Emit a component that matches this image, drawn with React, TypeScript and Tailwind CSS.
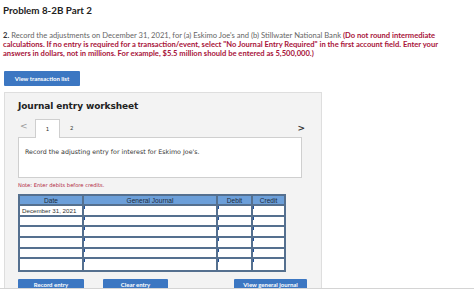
import React from "react";

// Static recreation of the "Problem 8-2B Part 2" journal entry worksheet.

const rows = ["December 31, 2021", "", "", "", "", ""];

function InputCell({ w }: { w: string }) {
  return (
    <div className={`${w} relative h-full border-l-2 border-[#55708f] bg-white`}>
      <span className="absolute left-0 top-0 h-[3px] w-[1px] bg-[#1f4f9a]" />
    </div>
  );
}

function BlueButton({ label, className = "" }: { label: string; className?: string }) {
  return (
    <div
      className={`flex h-[15px] justify-center rounded-[1px] bg-[#3c77c2] text-[6px] font-bold leading-[6px] text-white ${className}`}
    >
      {label}
    </div>
  );
}

export default function App() {
  return (
    <div className="h-[292px] w-[474px] overflow-hidden bg-white">
      <div className="h-[289px] overflow-hidden border-b border-[#d4d4d4] font-['Lato',sans-serif]">
        <h1 className="pl-[3px] pt-[3px] text-[9.8px] font-bold leading-[14px] text-[#222]">
          Problem 8-2B Part 2
        </h1>

        <p className="mt-[14px] whitespace-nowrap pl-[3px] text-[7.6px] leading-[9px] text-[#666]">
          <b className="text-[#333]">2.</b> Record the adjustments on December 31, 2021, for (a) Eskimo Joe's and (b)
          Stillwater National Bank{" "}
          <b className="text-[#a8133a]">(Do not round intermediate</b>
          <br />
          <b className="text-[#a8133a]">
            calculations. If no entry is required for a transaction/event, select "No Journal Entry Required" in the
            first account field. Enter your
          </b>
          <br />
          <b className="text-[#a8133a]">
            answers in dollars, not in millions. For example, $5.5 million should be entered as 5,500,000.)
          </b>
        </p>

        <BlueButton label="View transaction list" className="ml-[4px] mt-[13px] w-[76px] items-center" />

        <div className="ml-[4px] mt-[6px] w-[318px] border border-[#dedede] bg-[#f3f3f3] pb-[20px] pl-[13px] font-['DejaVu_Sans',sans-serif]">
          <h2 className="pt-[7px] text-[9px] font-bold leading-[12px] tracking-[-0.1px] text-[#222]">
            Journal entry worksheet
          </h2>

          <div className="mt-[7px] flex h-[18px] items-end">
            <span className="mb-[6px] w-[17px] pl-[2px] text-[9px] leading-[9px] text-[#999]">&lt;</span>
            <div className="relative z-10 -mb-px flex h-[19px] w-[25px] items-center justify-center border border-b-0 border-[#cfcfcf] bg-white text-[5.5px] text-[#333]">
              1
            </div>
            <span className="mb-[6px] ml-[10px] text-[5.5px] leading-[6px] text-[#333]">2</span>
            <span className="mb-[4px] ml-auto mr-[16px] text-[9px] font-bold leading-[9px] text-[#333]">&gt;</span>
          </div>

          <div className="h-[41px] w-[284px] border border-[#cfcfcf] bg-white pl-[6px] pt-[10px] text-[6.3px] leading-[7px] text-[#333]">
            Record the adjusting entry for interest for Eskimo Joe's.
          </div>

          <p className="mt-[4px] text-[5.2px] leading-[7px] text-[#b2283f]">Note: Enter debits before credits.</p>

          <div className="mt-[5px] w-[268px] border-2 border-[#55708f] font-['Liberation_Sans',sans-serif]">
            <div className="flex h-[10px] border-b-2 border-[#55708f] bg-[#6c9fd9] text-[6.6px] leading-[9px] text-[#1e2b3a]">
              <div className="w-[62px] text-center">Date</div>
              <div className="w-[134px] border-l-2 border-[#55708f] text-center">General Journal</div>
              <div className="w-[35px] border-l-2 border-[#55708f] text-center">Debit</div>
              <div className="flex-1 border-l-2 border-[#55708f] text-center">Credit</div>
            </div>
            {rows.map((d, i) => (
              <div
                key={i}
                className={`flex h-[10.7px] ${i < rows.length - 1 ? "border-b-2 border-[#55708f]" : ""} bg-white`}
              >
                <div className="w-[62px] pl-[2px] text-[6.2px] leading-[9px] text-[#333]">{d}</div>
                <InputCell w="w-[134px]" />
                <InputCell w="w-[35px]" />
                <InputCell w="flex-1" />
              </div>
            ))}
          </div>

          <div className="mt-[7px] flex font-['Lato',sans-serif]">
            <BlueButton label="Record entry" className="w-[66px] pt-[3px]" />
            <BlueButton label="Clear entry" className="ml-[19px] w-[65px] pt-[3px]" />
            <BlueButton label="View general journal" className="ml-[66px] w-[73px] pt-[3px]" />
          </div>
        </div>
      </div>
    </div>
  );
}
